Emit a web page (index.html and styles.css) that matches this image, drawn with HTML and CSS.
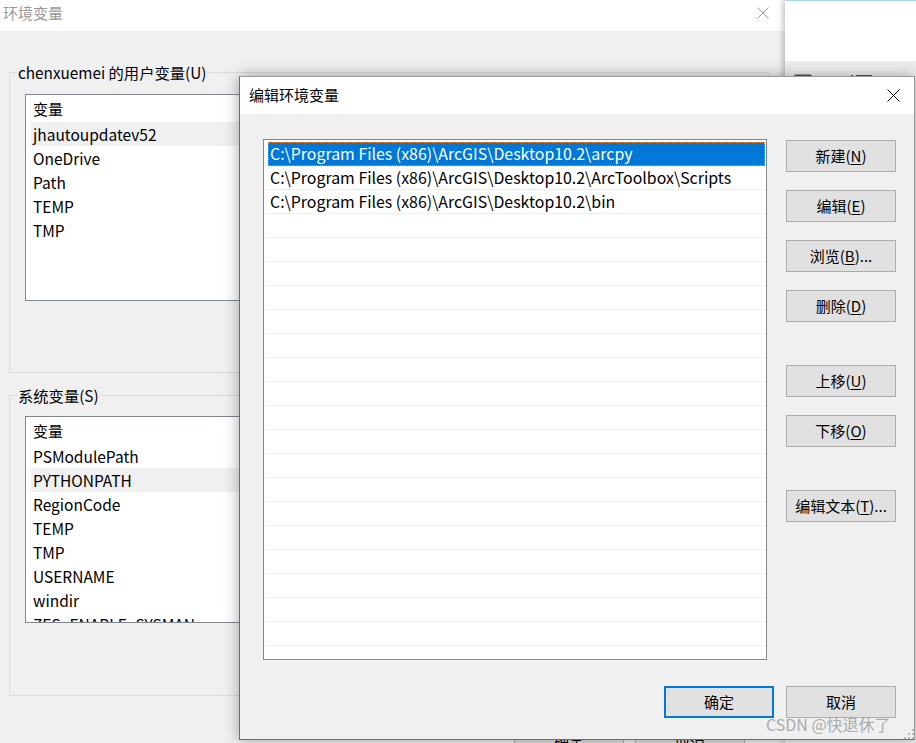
FILE: index.html
```html
<!DOCTYPE html>
<html lang="zh-CN">
<head>
    <meta charset="UTF-8">
    <title>编辑环境变量</title>
    <link rel="stylesheet" href="styles.css">
</head>
<body>
    <div class="desk">
        <!-- background window: 环境变量 -->
        <div class="win env">
            <div class="titlebar inactive">
                <span class="title">环境变量</span>
                <svg class="close" width="12" height="12" viewBox="0 0 12 12"><path d="M0.5 0.5L11.5 11.5M11.5 0.5L0.5 11.5" stroke="#9a9a9a" stroke-width="1"/></svg>
            </div>
            <div class="env-body">
                <fieldset class="group user">
                    <legend>chenxuemei 的用户变量(U)</legend>
                    <div class="listview">
                        <div class="lv-head">变量</div>
                        <div class="lv-row hot">jhautoupdatev52</div>
                        <div class="lv-row">OneDrive</div>
                        <div class="lv-row">Path</div>
                        <div class="lv-row">TEMP</div>
                        <div class="lv-row">TMP</div>
                    </div>
                </fieldset>
                <fieldset class="group sys">
                    <legend>系统变量(S)</legend>
                    <div class="listview">
                        <div class="lv-head">变量</div>
                        <div class="lv-row">PSModulePath</div>
                        <div class="lv-row hot">PYTHONPATH</div>
                        <div class="lv-row">RegionCode</div>
                        <div class="lv-row">TEMP</div>
                        <div class="lv-row">TMP</div>
                        <div class="lv-row">USERNAME</div>
                        <div class="lv-row">windir</div>
                        <div class="lv-row">ZES_ENABLE_SYSMAN</div>
                    </div>
                </fieldset>
                <div class="env-footer">
                    <button class="btn">确定</button>
                    <button class="btn">取消</button>
                </div>
            </div>
        </div>

        <!-- window at the right edge -->
        <div class="win side">
            <div class="side-top"></div>
            <div class="side-bar">
                <svg class="side-icon" width="20" height="16" viewBox="0 0 20 16"><rect x="1.5" y="1.5" width="17" height="13" rx="2" fill="none" stroke="#555" stroke-width="2"/></svg>
                <svg class="side-icon" width="22" height="16" viewBox="0 0 22 16"><path d="M1 1V16M5 2H21M5 6H21" stroke="#555" stroke-width="2"/></svg>
            </div>
        </div>

        <!-- foreground dialog: 编辑环境变量 -->
        <div class="dialog">
            <div class="titlebar">
                <span class="title">编辑环境变量</span>
                <svg class="close" width="13" height="13" viewBox="0 0 13 13"><path d="M0.5 0.5L12.5 12.5M12.5 0.5L0.5 12.5" stroke="#000" stroke-width="1"/></svg>
            </div>
            <div class="dialog-body">
                <div class="pathlist">
                    <div class="path-row selected">C:\Program Files (x86)\ArcGIS\Desktop10.2\arcpy</div>
                    <div class="path-row">C:\Program Files (x86)\ArcGIS\Desktop10.2\ArcToolbox\Scripts</div>
                    <div class="path-row">C:\Program Files (x86)\ArcGIS\Desktop10.2\bin</div>
                    <div class="path-row"></div>
                    <div class="path-row"></div>
                    <div class="path-row"></div>
                    <div class="path-row"></div>
                    <div class="path-row"></div>
                    <div class="path-row"></div>
                    <div class="path-row"></div>
                    <div class="path-row"></div>
                    <div class="path-row"></div>
                    <div class="path-row"></div>
                    <div class="path-row"></div>
                    <div class="path-row"></div>
                    <div class="path-row"></div>
                    <div class="path-row"></div>
                    <div class="path-row"></div>
                    <div class="path-row"></div>
                    <div class="path-row"></div>
                    <div class="path-row"></div>
                    <div class="path-row"></div>
                </div>
                <div class="side-buttons">
                    <button class="btn">新建(<u>N</u>)</button>
                    <button class="btn">编辑(<u>E</u>)</button>
                    <button class="btn">浏览(<u>B</u>)...</button>
                    <button class="btn">删除(<u>D</u>)</button>
                    <button class="btn gap-before">上移(<u>U</u>)</button>
                    <button class="btn">下移(<u>O</u>)</button>
                    <button class="btn gap-before">编辑文本(<u>T</u>)...</button>
                </div>
                <div class="dialog-footer">
                    <button class="btn default">确定</button>
                    <button class="btn">取消</button>
                </div>
            </div>
        </div>

        <div class="watermark">CSDN @快退休了</div>
        <svg class="grip" width="11" height="11" viewBox="0 0 11 11">
            <g fill="#b8b8b8">
                <rect x="8" y="0" width="2" height="2"/>
                <rect x="4" y="4" width="2" height="2"/><rect x="8" y="4" width="2" height="2"/>
                <rect x="0" y="8" width="2" height="2"/><rect x="4" y="8" width="2" height="2"/><rect x="8" y="8" width="2" height="2"/>
            </g>
        </svg>
    </div>
</body>
</html>
```

FILE: styles.css
```css
body {
    margin: 0;
    font-family: "Noto Sans CJK SC", "Noto Sans", sans-serif;
    font-size: 15px;
    color: #000;
    background: #f0f0f0;
    overflow: hidden;
}
.desk {
    position: relative;
    width: 916px;
    height: 743px;
    overflow: hidden;
}
.win {
    position: absolute;
    top: 0;
    background: #f0f0f0;
}
.titlebar {
    display: flex;
    align-items: center;
    justify-content: space-between;
    background: #fff;
}
.titlebar .title {
    line-height: 20px;
}

/* 环境变量 window */
.env {
    left: 0;
    width: 785px;
    height: 780px;
}
.env .titlebar {
    height: 31px;
    padding: 0 16px 5px 3px;
    box-sizing: border-box;
}
.titlebar.inactive .title {
    color: #999;
}
.env-body {
    padding: 0 16px 0 9px;
}
.group {
    margin: 31px 0 0;
    border: 1px solid #dcdcdc;
    padding: 12px 15px 71px;
    min-width: 0;
}
.group.sys {
    margin-top: 12px;
    padding-top: 11px;
    padding-bottom: 72px;
}
.group legend {
    margin-left: -8px;
    padding: 0 1px;
    line-height: 20px;
    font-size: 15.3px;
}
.listview {
    height: 207px;
    box-sizing: border-box;
    border: 1px solid #828790;
    background: #fff;
    padding-left: 5px;
    overflow: hidden;
}
.lv-head {
    height: 27px;
    line-height: 27px;
    padding-left: 2px;
}
.lv-row {
    height: 24px;
    line-height: 24px;
    padding-left: 2px;
    font-size: 15.5px;
    white-space: nowrap;
}
.lv-row.hot {
    background: #f0f0f0;
}
.env-footer {
    display: flex;
    justify-content: flex-end;
    gap: 11px;
    padding-right: 24px;
    margin-top: 30px;
}

/* window peeking at the right */
.side {
    left: 785px;
    width: 140px;
    height: 743px;
    box-shadow: -2px 0 6px rgba(0, 0, 0, 0.25);
}
.side-top {
    height: 60px;
    background: #fff;
    border-top: 1px solid #a9d3e3;
}
.side-bar {
    height: 17px;
    background: linear-gradient(#ececec, #f2f2f2);
    display: flex;
    align-items: flex-end;
    gap: 38px;
    padding-left: 8px;
}
.side-icon {
    display: block;
    margin-bottom: -12px;
}

/* 编辑环境变量 dialog */
.dialog {
    position: absolute;
    left: 239px;
    top: 76px;
    width: 676px;
    height: 664px;
    box-sizing: border-box;
    border: 1px solid #6e6e6e;
    border-top-color: #9a9a9a;
    border-right-color: #9a9a9a;
    background: #f0f0f0;
    box-shadow: 0 0 14px rgba(0, 0, 0, 0.35);
}
.dialog .titlebar {
    height: 37px;
    padding: 0 14px 1px 9px;
    box-sizing: border-box;
}
.dialog-body {
    display: grid;
    grid-template-columns: 504px 110px;
    column-gap: 19px;
    padding: 25px 0 0 23px;
}
.pathlist {
    height: 521px;
    box-sizing: border-box;
    border: 1px solid #828790;
    background: #fff;
    padding: 2px 1px 0 2px;
    overflow: hidden;
}
.path-row {
    height: 24px;
    line-height: 23px;
    box-sizing: border-box;
    border-bottom: 1px solid #efefef;
    padding-left: 4px;
    font-size: 15.9px;
    white-space: nowrap;
}
.path-row.selected {
    background: #0078d7;
    color: #fff;
    margin-left: 2px;
    padding-left: 2px;
    border-bottom: none;
    outline: 1px dotted #e8964a;
    outline-offset: -1px;
}
.side-buttons {
    display: flex;
    flex-direction: column;
    gap: 18px;
    padding-top: 1px;
}
.btn {
    width: 110px;
    height: 32px;
    box-sizing: border-box;
    border: 1px solid #adadad;
    background: #e1e1e1;
    font: inherit;
    color: #000;
    padding: 0;
    line-height: 28px;
}
.btn u {
    text-underline-offset: 2px;
}
.btn.gap-before {
    margin-top: 25px;
}
.btn.default {
    border: 2px solid #0078d7;
}
.dialog-footer {
    grid-column: 1 / 3;
    display: flex;
    justify-content: flex-end;
    gap: 12px;
    margin-top: 26px;
}

.watermark {
    position: absolute;
    left: 766px;
    top: 713px;
    font-size: 16px;
    line-height: 22px;
    color: rgba(130, 130, 130, 0.65);
    white-space: nowrap;
}
.grip {
    position: absolute;
    left: 904px;
    top: 729px;
}
```
